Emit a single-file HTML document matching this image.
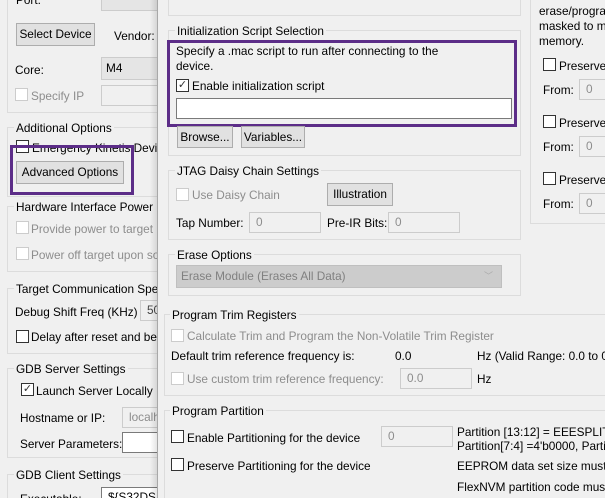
<!DOCTYPE html>
<html><head><meta charset="utf-8"><style>
*{margin:0;padding:0;box-sizing:border-box}
html,body{width:605px;height:498px;overflow:hidden}
body{background:#f0f0f0;font-family:"Liberation Sans",sans-serif;font-size:11.8px;color:#000}
#w{position:relative;width:605px;height:498px;overflow:hidden}
.a{position:absolute;white-space:nowrap}
.t{position:absolute;white-space:nowrap;line-height:16px;margin-top:1px}
.d{color:#8d8d8d}
.g{position:absolute;border:1px solid #dcdcdc}
.gl{position:absolute;background:#f0f0f0;padding:0 2px;line-height:16px;white-space:nowrap;margin-top:1px}
.btn{position:absolute;background:#e1e1e1;border:1px solid #adadad;text-align:center;line-height:20px}
.in{position:absolute;background:#fff;border:1px solid #7a7a7a;line-height:18px;padding-left:6px;overflow:hidden}
.ind{position:absolute;background:#f0f0f0;border:1px solid #cccccc;line-height:18px;padding-left:6px;color:#8d8d8d;overflow:hidden}
.cb{position:absolute;width:13px;height:13px;background:#fff;border:1px solid #333}
.cbd{position:absolute;width:13px;height:13px;background:#fff;border:1px solid #cccccc}
.pur{position:absolute;border:3px solid #5c2d88}
</style></head><body><div id="w">
<!-- left panel -->
<div class="g" style="left:7px;top:-10px;width:160px;height:123px"></div>
<div class="t" style="left:16px;top:-9px">Port:</div>
<div class="ind" style="left:101px;top:-10px;width:60px;height:21px;background:#e5e5e5;border-color:#ccc"></div>
<div class="btn" style="left:16px;top:23px;width:79px;height:23px">Select Device</div>
<div class="t" style="left:114px;top:27px">Vendor:</div>
<div class="t" style="left:15px;top:61px">Core:</div>
<div class="ind" style="left:101px;top:57px;width:60px;height:23px;background:#e5e5e5;color:#000;line-height:21px;padding-left:4px">M4</div>
<div class="cbd" style="left:15px;top:88px"></div>
<div class="t d" style="left:31px;top:87px">Specify IP</div>
<div class="ind" style="left:101px;top:85px;width:60px;height:21px"></div>

<div class="g" style="left:7px;top:127px;width:160px;height:70px"></div>
<div class="gl" style="left:14px;top:119px">Additional Options</div>
<div class="cb" style="left:16px;top:140px"></div>
<div class="t" style="left:32px;top:139px">Emergency Kinetis Device</div>
<div class="btn" style="left:16px;top:161px;width:108px;height:23px">Advanced Options</div>
<div class="pur" style="left:10px;top:145px;width:124px;height:50px"></div>

<div class="g" style="left:7px;top:206px;width:160px;height:66px"></div>
<div class="gl" style="left:14px;top:198px">Hardware Interface Power Control</div>
<div class="cbd" style="left:16px;top:221px"></div>
<div class="t d" style="left:31px;top:220px">Provide power to target</div>
<div class="cbd" style="left:16px;top:247px"></div>
<div class="t d" style="left:31px;top:246px">Power off target upon software exit</div>

<div class="g" style="left:7px;top:288px;width:160px;height:66px"></div>
<div class="gl" style="left:14px;top:280px">Target Communication Speed</div>
<div class="t" style="left:15px;top:303px">Debug Shift Freq (KHz)</div>
<div class="ind" style="left:140px;top:300px;width:30px;height:21px;color:#444">5000</div>
<div class="cb" style="left:16px;top:330px"></div>
<div class="t" style="left:31px;top:328px">Delay after reset and before</div>

<div class="g" style="left:7px;top:368px;width:160px;height:90px"></div>
<div class="gl" style="left:14px;top:360px">GDB Server Settings</div>
<div class="cb" style="left:21px;top:383px;font-size:11px;line-height:10px;text-align:center;color:#333">✓</div>
<div class="t" style="left:36px;top:382px">Launch Server Locally</div>
<div class="t" style="left:20px;top:409px">Hostname or IP:</div>
<div class="ind" style="left:122px;top:407px;width:45px;height:21px">localhost</div>
<div class="t" style="left:20px;top:435px">Server Parameters:</div>
<div class="in" style="left:122px;top:432px;width:45px;height:21px"></div>

<div class="g" style="left:7px;top:474px;width:160px;height:40px"></div>
<div class="gl" style="left:14px;top:466px">GDB Client Settings</div>
<div class="t" style="left:20px;top:490px">Executable:</div>
<div class="in" style="left:101px;top:487px;width:60px;height:21px">${S32DS</div>

<!-- overlay window -->
<div class="a" style="left:150px;top:0;width:8px;height:498px;background:linear-gradient(to right,rgba(0,0,0,0),rgba(0,0,0,0.12))"></div>
<div class="a" style="left:157px;top:0;width:448px;height:498px;background:#f0f0f0;border-left:1px solid #a8a8a8"></div>

<div class="g" style="left:168px;top:-10px;width:353px;height:26px"></div>
<div class="g" style="left:168px;top:30px;width:353px;height:126px"></div>
<div class="gl" style="left:175px;top:22px">Initialization Script Selection</div>
<div class="t" style="left:176px;top:42px">Specify a .mac script to run after connecting to the</div>
<div class="t" style="left:176px;top:57px">device.</div>
<div class="cb" style="left:176px;top:79px;font-size:11px;line-height:10px;text-align:center;color:#333">✓</div>
<div class="t" style="left:192px;top:77px">Enable initialization script</div>
<div class="in" style="left:176px;top:98px;width:336px;height:21px"></div>
<div class="pur" style="left:167px;top:40px;width:350px;height:87px"></div>
<div class="btn" style="left:177px;top:126px;width:56px;height:22px">Browse...</div>
<div class="btn" style="left:241px;top:126px;width:64px;height:22px">Variables...</div>

<div class="g" style="left:168px;top:170px;width:353px;height:70px"></div>
<div class="gl" style="left:175px;top:162px">JTAG Daisy Chain Settings</div>
<div class="cbd" style="left:176px;top:188px"></div>
<div class="t d" style="left:192px;top:186px">Use Daisy Chain</div>
<div class="btn" style="left:327px;top:183px;width:66px;height:23px">Illustration</div>
<div class="t" style="left:176px;top:214px">Tap Number:</div>
<div class="ind" style="left:249px;top:212px;width:72px;height:21px">0</div>
<div class="t" style="left:327px;top:214px">Pre-IR Bits:</div>
<div class="ind" style="left:388px;top:212px;width:72px;height:21px">0</div>

<div class="g" style="left:168px;top:254px;width:353px;height:42px"></div>
<div class="gl" style="left:175px;top:246px">Erase Options</div>
<div class="a" style="left:176px;top:265px;width:326px;height:23px;background:#cccccc;border:1px solid #bfbfbf;color:#808080;line-height:21px;padding-left:4px">Erase Module (Erases All Data)<span style="position:absolute;right:8px;color:#aaa;font-size:9px">﹀</span></div>

<div class="g" style="left:164px;top:314px;width:460px;height:82px"></div>
<div class="gl" style="left:170px;top:306px">Program Trim Registers</div>
<div class="cbd" style="left:171px;top:329px"></div>
<div class="t d" style="left:187px;top:327px">Calculate Trim and Program the Non-Volatile Trim Register</div>
<div class="t" style="left:171px;top:347px">Default trim reference frequency is:</div>
<div class="t" style="left:395px;top:347px">0.0</div>
<div class="t" style="left:477px;top:347px">Hz (Valid Range: 0.0 to 0.0)</div>
<div class="cbd" style="left:171px;top:372px"></div>
<div class="t d" style="left:187px;top:370px">Use custom trim reference frequency:</div>
<div class="ind" style="left:400px;top:368px;width:72px;height:21px">0.0</div>
<div class="t" style="left:477px;top:370px">Hz</div>

<div class="g" style="left:164px;top:410px;width:460px;height:100px"></div>
<div class="gl" style="left:170px;top:402px">Program Partition</div>
<div class="cb" style="left:171px;top:430px"></div>
<div class="t" style="left:187px;top:429px">Enable Partitioning for the device</div>
<div class="ind" style="left:381px;top:426px;width:72px;height:21px">0</div>
<div class="t" style="left:457px;top:423px">Partition [13:12] = EEESPLIT, Partition</div>
<div class="t" style="left:457px;top:437px">Partition[7:4] =4'b0000, Partition[3:0]</div>
<div class="cb" style="left:171px;top:458px"></div>
<div class="t" style="left:187px;top:457px">Preserve Partitioning for the device</div>
<div class="t" style="left:457px;top:457px">EEPROM data set size must be</div>
<div class="t" style="left:457px;top:478px">FlexNVM partition code must be</div>

<!-- right panel -->
<div class="g" style="left:530px;top:-10px;width:90px;height:234px"></div>
<div class="t" style="left:539px;top:2px">erase/program</div>
<div class="t" style="left:539px;top:17px">masked to mass</div>
<div class="t" style="left:539px;top:32px">memory.</div>
<div class="cb" style="left:543px;top:58px"></div>
<div class="t" style="left:559px;top:57px">Preserve</div>
<div class="t" style="left:543px;top:81px">From:</div>
<div class="ind" style="left:579px;top:79px;width:40px;height:21px">0</div>
<div class="cb" style="left:543px;top:115px"></div>
<div class="t" style="left:559px;top:114px">Preserve</div>
<div class="t" style="left:543px;top:138px">From:</div>
<div class="ind" style="left:579px;top:136px;width:40px;height:21px">0</div>
<div class="cb" style="left:543px;top:172px"></div>
<div class="t" style="left:559px;top:171px">Preserve</div>
<div class="t" style="left:543px;top:195px">From:</div>
<div class="ind" style="left:579px;top:193px;width:40px;height:21px">0</div>
</div></body></html>
